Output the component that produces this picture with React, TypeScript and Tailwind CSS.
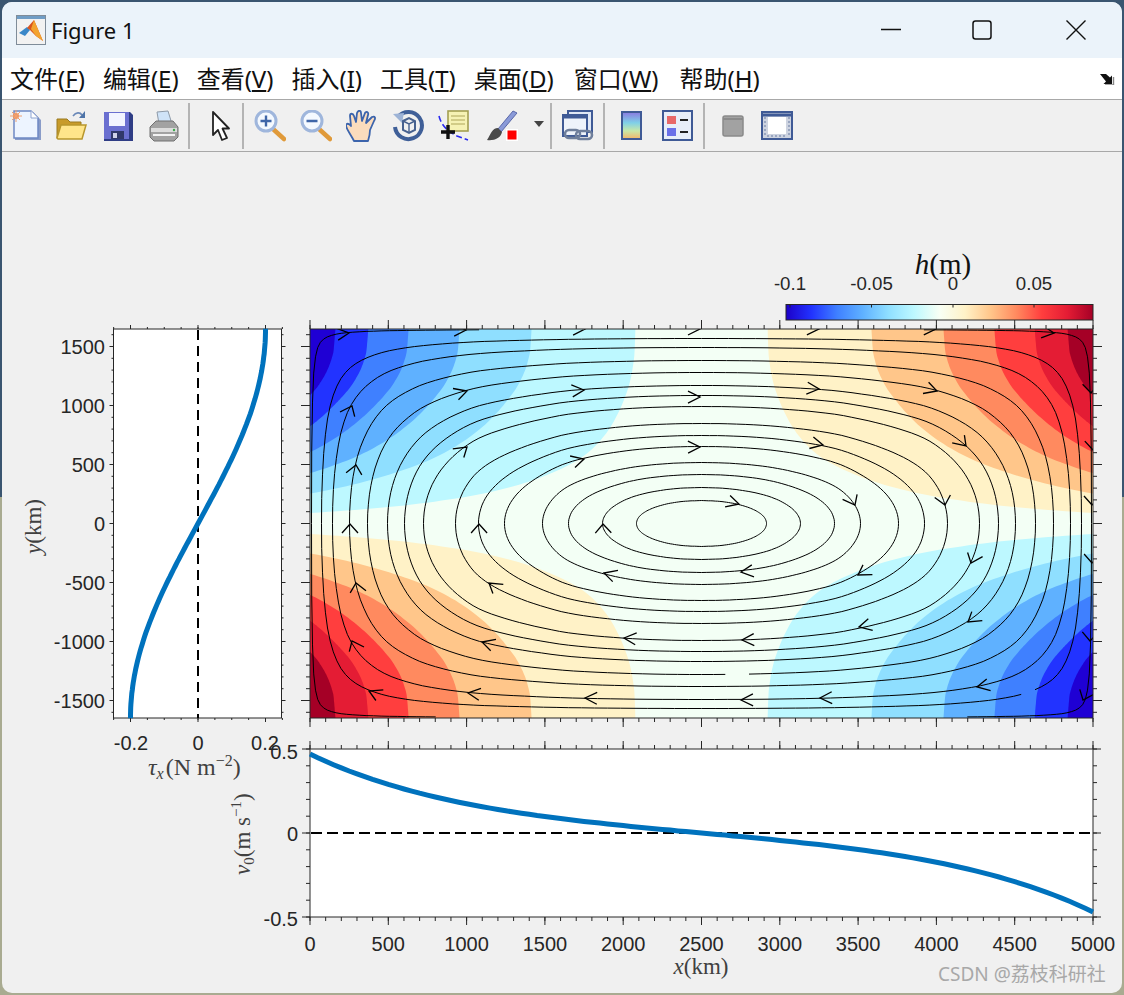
import React from 'react';

// --- small numeric helpers for the plots ---
const spline = (xs: number[], ys: number[]) => {
  const n = xs.length;
  const d = xs.slice(1).map((x, i) => (ys[i + 1] - ys[i]) / (x - xs[i]));
  const m = xs.map((_, i) => {
    if (i === 0) return d[0];
    if (i === n - 1) return d[n - 2];
    return d[i - 1] * d[i] <= 0 ? 0 : (2 * d[i - 1] * d[i]) / (d[i - 1] + d[i]);
  });
  return (x: number) => {
    if (x <= xs[0]) return ys[0];
    if (x >= xs[n - 1]) return ys[n - 1];
    let i = 0;
    while (x > xs[i + 1]) i++;
    const h = xs[i + 1] - xs[i];
    const t = (x - xs[i]) / h;
    const a = t * t * (3 - 2 * t);
    return ys[i] + a * (ys[i + 1] - ys[i]) + h * (t * (t - 1) * (t - 1) * m[i] + t * t * (t - 1) * m[i + 1]);
  };
};

const range = (a: number, b: number, step: number) => {
  const out: number[] = [];
  for (let v = a; v <= b + step / 100; v += step) out.push(v);
  return out;
};

const toPath = (pts: number[][], close = false) =>
  pts.map((p, i) => `${i ? 'L' : 'M'}${p[0].toFixed(1)} ${p[1].toFixed(1)}`).join('') + (close ? 'Z' : '');

// plot geometry, in page pixels
const CX = 701.5;
const CY = 523.5;
const HW = 391.5;
const HH = 194.5;

// height field h = f(|s|) * g(|t|) / 6.4
const levels = [0.5, 1.5, 2.5, 3.5, 4.5, 5.5];
const fS = [0, 0.169, 0.434, 0.618, 0.748, 0.851, 0.935, 1];
const fV = [0, 0.5, 1.5, 2.5, 3.5, 4.5, 5.5, 6.4];
const gT = [0, 0.054, 0.154, 0.259, 0.367, 0.5, 0.66, 0.72, 0.874, 1];
const gV = [0, 0.5, 1.5, 2.5, 3.5, 4.5, 5.5, 5.82, 6.31, 6.4];
const f = spline(fS, fV);
const invF = spline(fV, fS);
const invG = spline(gV, gT);
const negColors = ['#bdf8ff', '#8fdfff', '#5fb1ff', '#3f80ff', '#2233ff', '#1f00d4'];
const posColors = ['#fff2c7', '#ffc68a', '#ff8a5f', '#ff3e3e', '#e41c34', '#a50026'];

const bandPath = (L: number, sx: number, sy: number) => {
  const s0 = invF(L);
  const pts: number[][] = [];
  for (let i = 0; i <= 70; i++) {
    const u = i / 70;
    const s = s0 + (1 - s0) * u * u;
    const t = invG((L * 6.4) / Math.max(f(s), L));
    pts.push([CX + sx * s * HW, CY + sy * t * HH]);
  }
  pts.push([CX + sx * HW, CY + sy * HH]);
  return toPath(pts, true);
};

// streamlines: psi = P(|s|) * cos(pi t / 2)
const loopA = [65, 99, 133, 159, 197, 223, 246, 278, 297, 314, 334, 352, 369, 380, 390];
const loopB = [23, 36, 49, 61, 77, 88, 100, 117, 128, 138, 151, 163, 176, 185, 194];
const loopL = loopB.map((b) => Math.cos((Math.PI / 2) * (b / 195)));
const P = spline(
  [0, 0.04, 0.08, 0.12, ...loopA.map((a) => a / HW), 1],
  [1, 0.999, 0.9961, 0.9911, ...loopL, 0],
);
const psi = (x: number, y: number) => {
  const s = Math.min(Math.abs(x - CX) / HW, 0.995);
  const t = Math.min(Math.abs(y - CY) / 195, 0.99);
  return P(s) * Math.cos((Math.PI / 2) * t);
};

const gaps = [
  [487, 326, 917, 332],
  [438, 715, 965, 722],
  [731, 672, 739, 678],
  [771, 683, 776, 690],
  [1025, 690, 1034, 696],
];

const loopPath = (idx: number) => {
  const a = loopA[idx] / HW;
  const l = loopL[idx];
  const q: number[][] = [];
  for (let i = 0; i <= 44; i++) {
    const s = a * Math.sin((i / 44) * (Math.PI / 2));
    q.push([s * HW, (Math.acos(Math.min(1, l / P(s))) * 2 * 195) / Math.PI]);
  }
  const rev = [...q].reverse();
  const pts = [
    ...q.map((p) => [CX + p[0], CY - p[1]]),
    ...rev.map((p) => [CX + p[0], CY + p[1]]),
    ...q.map((p) => [CX - p[0], CY + p[1]]),
    ...rev.map((p) => [CX - p[0], CY - p[1]]),
  ];
  let d = '';
  let run: number[][] = [];
  pts.forEach((p) => {
    const hidden = gaps.some((g) => p[0] > g[0] && p[1] > g[1] && p[0] < g[2] && p[1] < g[3]);
    if (hidden) {
      if (run.length > 1) d += toPath(run);
      run = [];
    } else run.push(p);
  });
  if (run.length > 1) d += toPath(run);
  return d;
};

const arrowTips = [
  [349, 333], [466, 330], [585, 329], [700, 329], [467, 391], [584, 390], [700, 397], [352, 406],
  [467, 447], [584, 459], [700, 447], [356, 465], [350, 524], [479, 524], [603, 524], [356, 583],
  [489, 583], [604, 573], [352, 641], [482, 642], [624, 638], [369, 691], [468, 693], [585, 698],
  [819, 329], [936, 329], [1054, 333], [819, 389], [937, 391], [1091, 393], [823, 445], [966, 446],
  [1093, 450], [739, 504], [855, 505], [945, 505], [1092, 505], [971, 563], [858, 575], [741, 572],
  [1092, 563], [859, 627], [742, 640], [968, 622], [1090, 641], [977, 687], [820, 698], [741, 700],
  [1083, 700],
];

const arrowPath = (x: number, y: number) => {
  const e = 1.5;
  const xx = Math.min(Math.max(x, CX - HW + 4), CX + HW - 4);
  const yy = Math.min(Math.max(y, CY - HH + 4), CY + HH - 4);
  const u = psi(xx, yy + e) - psi(xx, yy - e);
  const v = -(psi(xx + e, yy) - psi(xx - e, yy));
  // the heads are drawn in data space, which is stretched on screen
  const dx = u / 12;
  const dy = v / 9;
  const n = Math.hypot(dx, dy) || 1;
  const ax = dx / n;
  const ay = dy / n;
  const b1 = [x + (-ax - 0.667 * ay) * 12, y + (-ay + 0.667 * ax) * 9];
  const b2 = [x + (-ax + 0.667 * ay) * 12, y + (-ay - 0.667 * ax) * 9];
  return toPath([b1, [x, y], b2]);
};

// outward ticks on the four sides of a box
const tickPath = (
  box: number[],
  xMaj: number[], xMin: number[], yMaj: number[], yMin: number[],
  lenMaj: number, lenMin: number,
) => {
  const [x0, y0, x1, y1] = box;
  let d = '';
  const xt = (xs: number[], l: number) => xs.forEach((x) => { d += `M${x} ${y0}V${y0 - l}M${x} ${y1}V${y1 + l}`; });
  const yt = (ys: number[], l: number) => ys.forEach((y) => { d += `M${x0} ${y}H${x0 - l}M${x1} ${y}H${x1 + l}`; });
  xt(xMaj, lenMaj); xt(xMin, lenMin); yt(yMaj, lenMaj); yt(yMin, lenMin);
  return d;
};

const yPx = (v: number) => CY - v * 0.118;
const xPx = (v: number) => 310 + v * 0.1566;
const tauX = (v: number) => 198 + v * 337.5;
const v0Y = (v: number) => 833 - v * 168;

const tauCurve = range(-1650, 1650, 30).map((y) => [tauX(0.2 * Math.sin((Math.PI * y) / 3300)), yPx(y)]);
const v0Curve = range(0, 5000, 50).map((x) => [xPx(x), v0Y(0.0904 * Math.sinh((2500 - x) * 0.00094))]);

const barStops = ['#1c00c8', '#2233ff', '#3f80ff', '#5fb1ff', '#8fdfff', '#bdf8ff', '#f8fff5', '#fff2c7', '#ffc68a', '#ff8a5f', '#ff3e3e', '#e41c34', '#a50026'];

const Plots = () => (
  <svg width={1120} height={841} viewBox="2 152 1120 841" className="block font-['Liberation_Sans']">
    <defs>
      <clipPath id="plot"><rect x={310} y={329} width={783} height={389} /></clipPath>
      <linearGradient id="bar">
        {barStops.map((c, i) => <stop key={i} offset={i / 12} stopColor={c} />)}
      </linearGradient>
    </defs>

    {/* contour panel */}
    <rect x={310} y={329} width={783} height={389} fill="#f3fff5" />
    {levels.map((L, i) => (
      <g key={L}>
        <path d={bandPath(L, 1, -1)} fill={posColors[i]} />
        <path d={bandPath(L, -1, 1)} fill={posColors[i]} />
        <path d={bandPath(L, -1, -1)} fill={negColors[i]} />
        <path d={bandPath(L, 1, 1)} fill={negColors[i]} />
      </g>
    ))}
    <g clipPath="url(#plot)" fill="none" stroke="#000">
      {loopA.map((_, i) => <path key={i} d={loopPath(i)} strokeWidth={1} />)}
      {arrowTips.map((p, i) => <path key={i} d={arrowPath(p[0], p[1])} strokeWidth={1.3} />)}
    </g>
    <rect x={310} y={329} width={783} height={389} fill="none" stroke="#262626" />
    <path
      d={tickPath([310, 329, 1093, 718], range(0, 5000, 500).map(xPx), range(0, 5000, 100).map(xPx), range(-1500, 1500, 500).map(yPx), range(-1600, 1600, 100).map(yPx), 9, 4)}
      stroke="#262626" fill="none"
    />

    {/* colorbar */}
    <rect x={786} y={304.5} width={307} height={15.5} fill="url(#bar)" stroke="#262626" />
    <path d="M790 304.5v3M871.5 304.5v3M953 304.5v3M1034 304.5v3" stroke="#262626" />
    <g fontSize={18.7} fill="#262626" textAnchor="middle">
      <text x={790} y={290}>-0.1</text>
      <text x={871.5} y={290}>-0.05</text>
      <text x={953} y={290}>0</text>
      <text x={1034} y={290}>0.05</text>
    </g>
    <text x={943} y={274} fontSize={29} textAnchor="middle" fill="#111" className="font-['Liberation_Serif']">
      <tspan fontStyle="italic">h</tspan>(m)
    </text>

    {/* wind stress panel */}
    <rect x={113.5} y={329} width={168} height={389} fill="#fff" stroke="#262626" />
    <path
      d={tickPath([113.5, 329, 281.5, 718], [-0.2, 0, 0.2].map(tauX), range(-0.25, 0.25, 0.05).map(tauX), range(-1500, 1500, 500).map(yPx), range(-1600, 1600, 100).map(yPx), 4, 2)}
      stroke="#262626" fill="none"
    />
    <path d="M198 330V718" stroke="#000" strokeWidth={2} strokeDasharray="10 6" />
    <path d={toPath(tauCurve)} stroke="#0072bd" strokeWidth={5} fill="none" />
    <g fontSize={20} fill="#262626" textAnchor="end">
      {[1500, 1000, 500, 0, -500, -1000, -1500].map((v) => (
        <text key={v} x={105} y={yPx(v) + 7}>{v}</text>
      ))}
    </g>
    <g fontSize={20} fill="#262626" textAnchor="middle">
      <text x={131} y={750}>-0.2</text>
      <text x={198} y={750}>0</text>
      <text x={265} y={750}>0.2</text>
    </g>
    <text x={148} y={775} fontSize={24} fill="#404040" className="font-['Liberation_Serif']">
      <tspan fontStyle="italic">τ</tspan>
      <tspan fontStyle="italic" fontSize={16} dy={4}>x</tspan>
      <tspan dx={2} dy={-4}>(N m</tspan>
      <tspan fontSize={16} dy={-9}>−2</tspan>
      <tspan dy={9}>)</tspan>
    </text>
    <text transform="translate(41 554) rotate(-90)" fontSize={23} fill="#404040" className="font-['Liberation_Serif']">
      <tspan fontStyle="italic">y</tspan>(km)
    </text>

    {/* boundary velocity panel */}
    <rect x={310} y={749} width={783} height={168} fill="#fff" stroke="#262626" />
    <path
      d={tickPath([310, 749, 1093, 917], range(0, 5000, 500).map(xPx), range(0, 5000, 100).map(xPx), [-0.5, 0, 0.5].map(v0Y), range(-0.5, 0.5, 0.1).map(v0Y), 8, 4)}
      stroke="#262626" fill="none"
    />
    <path d="M311 833H1090" stroke="#000" strokeWidth={2} strokeDasharray="11 5" />
    <path d={toPath(v0Curve)} stroke="#0072bd" strokeWidth={5} fill="none" />
    <g fontSize={20} fill="#262626" textAnchor="end">
      <text x={298} y={759}>0.5</text>
      <text x={298} y={841}>0</text>
      <text x={298} y={926}>-0.5</text>
    </g>
    <g fontSize={20} fill="#262626" textAnchor="middle">
      {range(0, 5000, 500).map((v) => <text key={v} x={xPx(v)} y={951}>{Math.round(v)}</text>)}
    </g>
    <text transform="translate(250 875) rotate(-90)" fontSize={23} fill="#404040" className="font-['Liberation_Serif']">
      <tspan fontStyle="italic">v</tspan>
      <tspan fontSize={15} dy={4}>0</tspan>
      <tspan dy={-4}>(m s</tspan>
      <tspan fontSize={15} dy={-9}>−1</tspan>
      <tspan dy={9}>)</tspan>
    </text>
    <text x={701} y={974} fontSize={23} textAnchor="middle" fill="#404040" className="font-['Liberation_Serif']">
      <tspan fontStyle="italic">x</tspan>(km)
    </text>

    <text x={938} y={981} fontSize={19} fill="#a8a8a8" className="font-['Noto_Sans','Noto_Sans_CJK_SC',sans-serif]">
      CSDN @荔枝科研社
    </text>
  </svg>
);

// --- toolbar drawings ---
const Ico: React.FC<{ children: React.ReactNode; className?: string }> = ({ children, className }) => (
  <svg viewBox="0 0 32 32" className={`w-8 h-8 shrink-0 ${className ?? ''}`}>{children}</svg>
);

const Sep: React.FC<{ className?: string }> = ({ className }) => (
  <div className={`w-[2px] h-[46px] shrink-0 bg-[#b4b4b4] ${className ?? ''}`} />
);

const MenuItem: React.FC<{ label: string; k: string; className?: string }> = ({ label, k, className }) => (
  <span className={className}>{label}(<span className="underline underline-offset-2">{k}</span>)</span>
);

const Toolbar = () => (
  <div className="h-[52px] shrink-0 flex items-center pl-2 border-b border-[#a8a8a8] bg-[#f0f0f0]">
    {/* new */}
    <Ico>
      <path d="M5 2H23L31 10V30H5Z" fill="#8a9cc8" />
      <path d="M4 1H21L28 8V28H4Z" fill="#edf4ff" stroke="#6e88c4" strokeWidth={1.5} />
      <path d="M21 1V8H28" fill="#fff" stroke="#8fa4d0" />
      <circle cx={6} cy={6} r={3} fill="#f09058" />
      <path d="M6 0V12M0 6H12M2 2L10 10M10 2L2 10" stroke="#f0a070" strokeWidth={1} />
    </Ico>
    {/* open */}
    <Ico className="ml-[13px]">
      <path d="M2 9H12L15 12H26V28H2Z" fill="#c89b2a" stroke="#9a7a20" />
      <path d="M2 28L6 15H31L27 29H3Z" fill="#ffe58a" stroke="#b8962c" strokeWidth={1.5} />
      <path d="M18 6C21 2 25 2 27 5" stroke="#6a88b8" strokeWidth={1.6} fill="none" />
      <path d="M30 1V8H24Z" fill="#4f74a8" />
    </Ico>
    {/* save */}
    <Ico className="ml-[15px]">
      <path d="M2 2H28L31 5V31H2Z" fill="#2f3d85" />
      <path d="M2 2H27V29H2Z" fill="#6a6fd0" />
      <rect x={7} y={3} width={16} height={13} fill="#f2f4ff" />
      <rect x={9} y={21} width={13} height={8} fill="#30386a" />
      <rect x={11} y={23} width={4} height={5} fill="#cfd2e8" />
    </Ico>
    {/* print */}
    <Ico className="ml-[14px]">
      <path d="M9 2L20 1L24 14H11Z" fill="#cfe3f8" stroke="#8e9aa8" />
      <path d="M2 17L8 11H25L30 17V27L26 31H6L2 27Z" fill="#a2a2a2" stroke="#707070" />
      <path d="M3 18H29V22H3Z" fill="#dcdcdc" />
      <path d="M5 25H27" stroke="#f2f2f2" strokeWidth={2} />
      <circle cx={26} cy={20} r={1.2} fill="#3aa84a" />
    </Ico>
    <Sep className="ml-[8px]" />
    {/* pointer */}
    <Ico className="ml-[14px]">
      <path d="M9 2V25L14 20L18 30L23 28L18.500 18.500H25Z" fill="#fff" stroke="#222" strokeWidth={1.8} strokeLinejoin="round" />
    </Ico>
    <Sep className="ml-[6px]" />
    {/* zoom in */}
    <Ico className="ml-[10px]">
      <path d="M19 19L30 29" stroke="#e09a3a" strokeWidth={4.5} strokeLinecap="round" />
      <circle cx={12} cy={11} r={10} fill="#f4f9ff" stroke="#9fb6dc" strokeWidth={3} />
      <path d="M6.500 11H17.500M12 5.500V16.500" stroke="#3f66a8" strokeWidth={2.4} />
    </Ico>
    {/* zoom out */}
    <Ico className="ml-[14px]">
      <path d="M19 19L30 29" stroke="#e09a3a" strokeWidth={4.5} strokeLinecap="round" />
      <circle cx={12} cy={11} r={10} fill="#f4f9ff" stroke="#9fb6dc" strokeWidth={3} />
      <path d="M6.500 11H17.500" stroke="#3f66a8" strokeWidth={2.4} />
    </Ico>
    {/* hand */}
    <Ico className="ml-[14px]">
      <path
        d="M8 31C5 25 1 20 0 16C0 13 3 13 5 16L4 6C4 3 7 3 8 6L10 12L11 3C12 0 15 0 15 3L16 11L19 3C20 1 23 2 22 5L20 13L26 7C29 6 30 8 28 11L24 20C24 24 23 28 22 31Z"
        fill="#fbdcbd" stroke="#3c64ac" strokeWidth={1.8} strokeLinejoin="round"
      />
    </Ico>
    {/* rotate */}
    <Ico className="ml-[14px]">
      <path d="M6 7A13.500 13.500 0 1 1 3 17" fill="none" stroke="#3f5f98" strokeWidth={4} />
      <path d="M1 4L12 3L10 13Z" fill="#9db3d6" />
      <path d="M11 11L17 8L23 11V20L17 23L11 20Z" fill="none" stroke="#47618f" strokeWidth={2} />
      <path d="M11 11L17 14L23 11M17 14V23" fill="none" stroke="#47618f" strokeWidth={1.4} />
    </Ico>
    {/* data cursor */}
    <Ico className="ml-[13px]">
      <path d="M2 6C4 14 8 18 13 22L20 26L31 30" fill="none" stroke="#2a2af0" strokeWidth={1.6} strokeDasharray="6 3" />
      <rect x={11} y={1} width={20} height={20} fill="#f6f2b4" stroke="#a49f52" strokeWidth={1.6} />
      <path d="M14 6H28M14 10H28M14 14H28" stroke="#c6c078" strokeWidth={1.6} />
      <path d="M11 15V29M4 22H18" stroke="#111" strokeWidth={3.4} />
    </Ico>
    {/* brush */}
    <Ico className="ml-[17px]">
      <path d="M31 3L27 1L12 19L15 22Z" fill="#8a9ad8" stroke="#5a68a8" />
      <path d="M12 18C6 18 5 24 1 30C8 31 15 28 16 22Z" fill="#4a4a4a" />
      <rect x={20} y={19} width={12} height={12} fill="#fff" />
      <rect x={21.500} y={20.500} width={9} height={9} fill="#ff0000" />
    </Ico>
    <svg viewBox="0 0 10 6" className="w-[10px] h-[6px] ml-[16px] shrink-0 self-center mb-[4px]"><path d="M0 0H10L5 6Z" fill="#444" /></svg>
    <Sep className="ml-[6px]" />
    {/* link */}
    <Ico className="ml-[10px]">
      <rect x={6} y={1} width={24} height={21} fill="#dfe7f5" stroke="#3f5a96" strokeWidth={2} />
      <rect x={1} y={5} width={24} height={21} fill="#eef3fb" stroke="#3f5a96" strokeWidth={2} />
      <path d="M1 7H25" stroke="#3f5a96" strokeWidth={3} />
      <rect x={3} y={20} width={15} height={8} rx={4} fill="none" stroke="#6f7f9c" strokeWidth={2.6} />
      <rect x={14} y={21} width={16} height={8} rx={4} fill="none" stroke="#6f7f9c" strokeWidth={2.6} />
    </Ico>
    <Sep className="ml-[9px]" />
    {/* colorbar */}
    <svg viewBox="0 0 22 30" className="w-[22px] h-[30px] ml-[16px] shrink-0">
      <defs>
        <linearGradient id="cb" x2="0" y2="1">
          <stop offset="0" stopColor="#8a78e0" />
          <stop offset="0.4" stopColor="#7fd0e8" />
          <stop offset="0.7" stopColor="#c8e8a8" />
          <stop offset="1" stopColor="#f4b468" />
        </linearGradient>
      </defs>
      <rect x={1} y={1} width={19} height={27} fill="url(#cb)" stroke="#3f5a96" strokeWidth={2} />
    </svg>
    {/* legend */}
    <Ico className="ml-[19px]">
      <rect x={1} y={1} width={29} height={29} fill="#e8eef8" stroke="#3f5a96" strokeWidth={2} />
      <rect x={5} y={6} width={9} height={8} fill="#e86868" />
      <rect x={5} y={18} width={9} height={8} fill="#6a70e8" />
      <path d="M18 10H26M18 22H26" stroke="#222" strokeWidth={2} />
    </Ico>
    <Sep className="ml-[9px]" />
    {/* plot tools box */}
    <svg viewBox="0 0 22 22" className="w-[22px] h-[22px] ml-[17px] shrink-0">
      <rect x={1} y={1} width={20} height={20} rx={2} fill="#a2a2a2" stroke="#8a8a8a" strokeWidth={1.5} />
      <path d="M1 4H21" stroke="#8a8a8a" strokeWidth={2} />
    </svg>
    {/* frame */}
    <Ico className="ml-[17px]">
      <rect x={1} y={2} width={30} height={27} fill="#cdd3e0" stroke="#3f5a96" strokeWidth={2} />
      <path d="M1 5H31" stroke="#3f5a96" strokeWidth={3} />
      <path d="M4 7V27M28 7V27M6 26H26" stroke="#9aa6c0" strokeWidth={2} strokeDasharray="2 2" />
      <rect x={7} y={7} width={18} height={17} fill="#fff" />
    </Ico>
  </div>
);

const App = () => (
  <div className="w-[1124px] h-[995px] overflow-hidden pt-[2px] pl-[2px] bg-[linear-gradient(#3a5570_0,#3a5570_50%,#a9ab91_50%)]">
    <div className="w-[1120px] h-[991px] rounded-[10px] overflow-hidden bg-[#f0f0f0] flex flex-col font-['Noto_Sans','Noto_Sans_CJK_SC',sans-serif]">
      {/* title bar */}
      <div className="h-[56px] shrink-0 bg-[#ebf3fa] flex items-center pl-[14px] pr-[36px]">
        <svg viewBox="0 0 30 30" className="w-[30px] h-[30px] shrink-0">
          <rect x={0.500} y={0.500} width={29} height={29} fill="#f2f2f2" stroke="#7f8c99" />
          <rect x={1} y={1} width={28} height={3} fill="#6f9dc6" />
          <path d="M3 18L11 12L14 15L9 21Z" fill="#3a87c8" />
          <path d="M11 13L18 5L27 26L20 21L14 15Z" fill="#d9541e" />
          <path d="M18 5L15 14L20 21L27 26Z" fill="#f3a32f" />
        </svg>
        <span className="ml-[5px] text-[22px] leading-none text-[#111]">Figure 1</span>
        <svg viewBox="0 0 20 20" className="w-5 h-5 ml-auto mr-[71px]"><path d="M0 9.500H20" stroke="#111" strokeWidth={1.5} /></svg>
        <svg viewBox="0 0 20 20" className="w-5 h-5 mr-[74px]"><rect x={1} y={1} width={18} height={18} rx={2.500} fill="none" stroke="#111" strokeWidth={1.5} /></svg>
        <svg viewBox="0 0 20 20" className="w-5 h-5"><path d="M0.500 0.500L19.500 19.500M19.500 0.500L0.500 19.500" stroke="#111" strokeWidth={1.4} /></svg>
      </div>
      {/* menu */}
      <div className="h-[42px] shrink-0 bg-white border-b border-[#a8a8a8] flex items-center gap-[18px] pl-[8px] pr-[6px] text-[24px] leading-none text-[#111]">
        <MenuItem label="文件" k="F" />
        <MenuItem label="编辑" k="E" />
        <MenuItem label="查看" k="V" />
        <MenuItem label="插入" k="I" />
        <MenuItem label="工具" k="T" />
        <MenuItem label="桌面" k="D" />
        <MenuItem label="窗口" k="W" className="ml-[2px]" />
        <MenuItem label="帮助" k="H" className="ml-[3px]" />
        <svg viewBox="0 0 16 12" className="w-4 h-3 ml-auto"><path d="M0 1H6L10 4.500L12 2.500V11H3.500L6 8.500Z" fill="#111" /><path d="M13.500 4V12H5" stroke="#888" strokeWidth={1.4} fill="none" /></svg>
      </div>
      <Toolbar />
      <Plots />
    </div>
  </div>
);

export default App;
